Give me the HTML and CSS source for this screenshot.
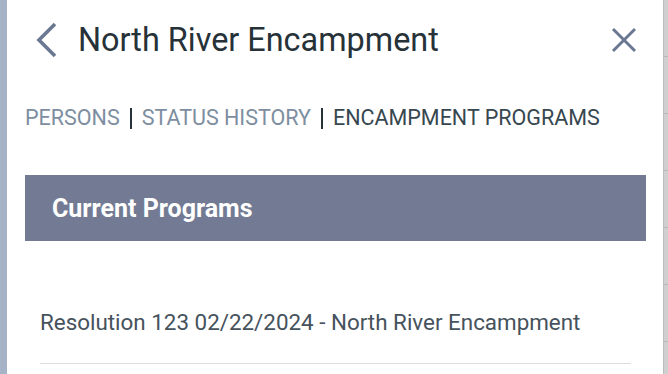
FILE: index.html
```html
<!DOCTYPE html>
<html>
<head>
<meta charset="utf-8">
<link rel="stylesheet" href="styles.css">
</head>
<body>
<div class="layout">
  <div class="side-left"></div>
  <div class="panel">
    <div class="header">
      <svg class="back" width="22" height="36" viewBox="0 0 22 36"><path d="M19 2 L3 18 L19 34" fill="none" stroke="#6b7891" stroke-width="3.6"/></svg>
      <h1 class="title">North River Encampment</h1>
      <svg class="close" width="26" height="26" viewBox="0 0 26 26"><path d="M2 2 L24 24 M24 2 L2 24" fill="none" stroke="#6b7891" stroke-width="3"/></svg>
    </div>
    <div class="tabs">
      <span class="tab">PERSONS</span><span class="sep"></span><span class="tab">STATUS HISTORY</span><span class="sep"></span><span class="tab active">ENCAMPMENT PROGRAMS</span>
    </div>
    <div class="section-head">Current Programs</div>
    <div class="row">Resolution 123 02/22/2024 - North River Encampment</div>
  </div>
  <div class="side-right"></div>
</div>
</body>
</html>
```
FILE: styles.css
```css
html, body {
  margin: 0;
  padding: 0;
  background: #ffffff;
  font-family: Roboto, "Liberation Sans", sans-serif;
}
.layout {
  display: flex;
  width: 668px;
  height: 374px;
  overflow: hidden;
}
.side-left {
  width: 7px;
  flex: none;
  background: #a6b3c7;
}
.side-right {
  width: 4px;
  flex: none;
  background: repeating-linear-gradient(180deg, #cfcfcf 0, #cfcfcf 56px, #b9b9b9 56px, #b9b9b9 57px);
  border-left: 1px solid #bdbdbd;
}
.panel {
  flex: 1;
  padding: 0 17px 0 18px;
  display: flex;
  flex-direction: column;
}
.header {
  height: 80px;
  display: flex;
  align-items: center;
}
.back {
  margin-left: 11px;
  flex: none;
}
.title {
  margin: 0 0 0 20px;
  font-size: 32.4px;
  font-weight: 400;
  color: #263238;
  flex: 1;
}
.close {
  margin-right: 9px;
  flex: none;
}
.tabs {
  margin-top: 26px;
  height: 24px;
  display: flex;
  align-items: center;
  font-size: 21.5px;
  line-height: 24px;
  color: #7d8ea0;
}
.tab.active {
  color: #37474f;
}
.sep {
  width: 2px;
  height: 21px;
  background: #263238;
  margin: 0 10px;
}
.section-head {
  margin-top: 45px;
  height: 66px;
  background: #727b93;
  color: #ffffff;
  font-weight: 700;
  font-size: 25px;
  display: flex;
  align-items: center;
  padding-left: 27px;
}
.row {
  margin: 0 15px;
  padding: 69px 0 28px;
  font-size: 22.4px;
  line-height: 25px;
  color: #46525c;
  border-bottom: 1px solid #dddddd;
}
```
